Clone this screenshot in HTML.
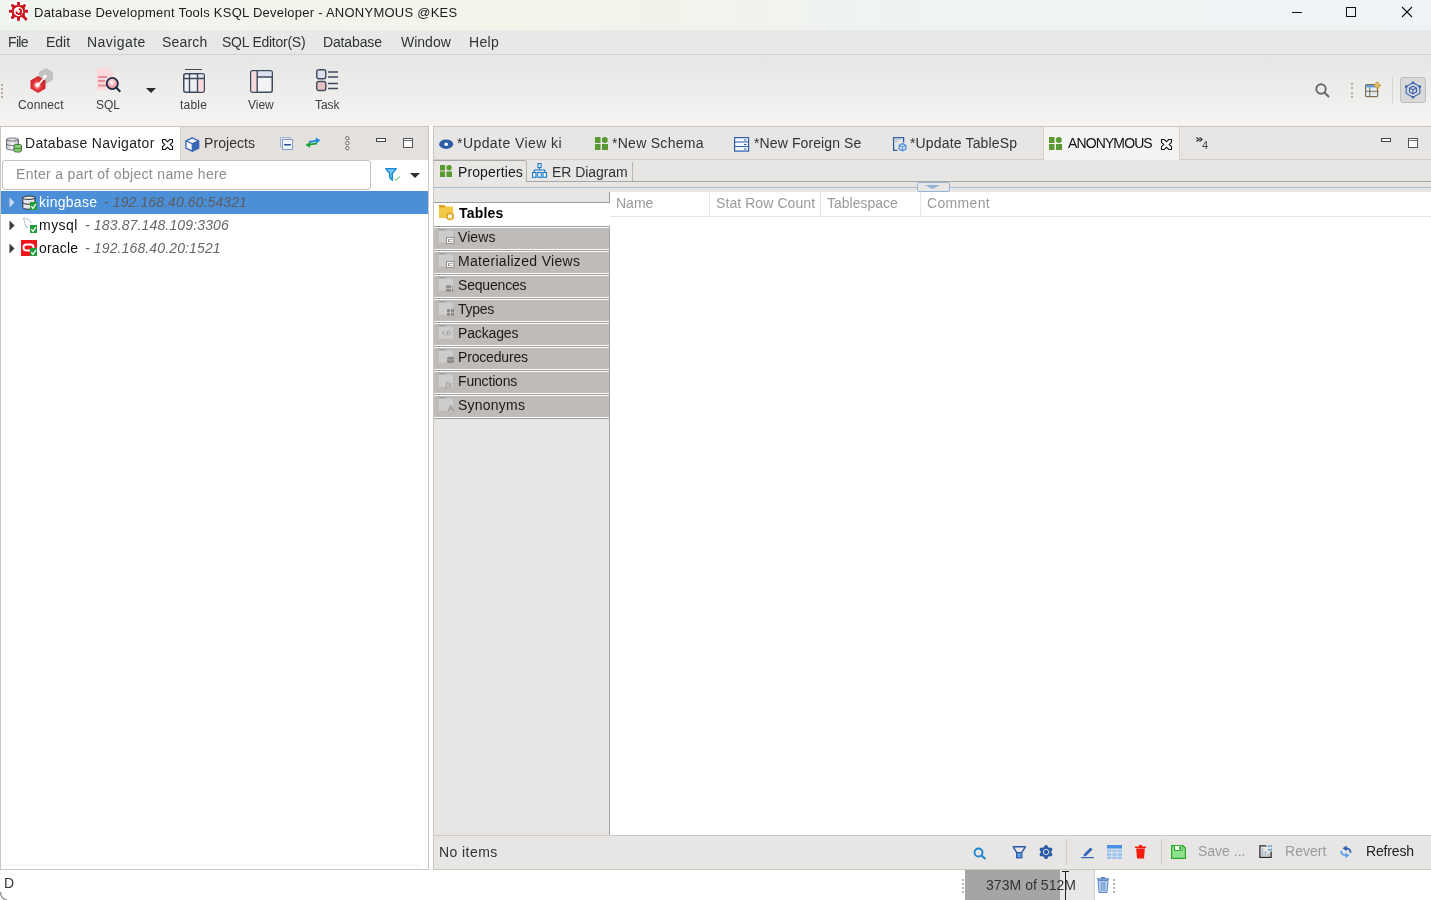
<!DOCTYPE html>
<html><head><meta charset="utf-8"><style>
html,body{margin:0;padding:0;width:1431px;height:900px;overflow:hidden;background:#fff;}
body{position:relative;font-family:"Liberation Sans",sans-serif;}
.t{position:absolute;white-space:nowrap;will-change:transform;font-family:"Liberation Sans",sans-serif;}
svg{overflow:visible}
</style></head><body>
<div style="position:absolute;left:0px;top:0px;width:1431px;height:30px;background:linear-gradient(90deg,#f0f4ee 0%,#f3f4ea 35%,#f1f3ec 50%,#eef3f3 65%,#eef3f5 100%);"></div>
<div style="position:absolute;left:9px;top:2px;width:19px;height:19px;background:#fff;"></div>
<svg style="position:absolute;left:9px;top:2px" width="19" height="19" viewBox="0 0 19 19"><g fill="#c8141c">
<rect x="8" y="0" width="2.9" height="3.6"/><rect x="8" y="15" width="2.9" height="3.8"/>
<rect x="0" y="7.8" width="3.6" height="2.9"/><rect x="15.3" y="7.8" width="3.7" height="2.9"/>
<circle cx="3.5" cy="3.6" r="1.6"/><circle cx="15.4" cy="3.6" r="1.6"/><circle cx="3.5" cy="15.4" r="1.6"/>
<path fill-rule="evenodd" d="M3.1 3.2 H15.8 V15.3 H3.1Z M9.45 4.75 A4.7 4.7 0 1 0 9.46 4.75Z"/>
<path fill-rule="evenodd" d="M9.8 6.3 A3.3 3.3 0 1 1 6.5 9.6 L8.2 9.3 A1.5 1.5 0 1 0 9.6 7.9Z"/>
<path d="M10.8 10.9 L17.8 18" stroke="#c8141c" stroke-width="2.7"/></g>
<path d="M12.2 12.3 L13 13.1" stroke="#fff" stroke-width="0.8"/></svg>
<div class="t" style="left:33.5px;top:6px;font-size:13px;line-height:13px;color:#1c1c1c;letter-spacing:0.246px;">Database Development Tools KSQL Developer - ANONYMOUS @KES</div>
<div style="position:absolute;left:1292px;top:12px;width:10px;height:1px;background:#111;"></div>
<div style="position:absolute;left:1346px;top:7px;width:10px;height:10px;border:1px solid #111;box-sizing:border-box;"></div>
<svg style="position:absolute;left:1401px;top:6px" width="12" height="12" viewBox="0 0 12 12"><path d="M1 1L11 11M11 1L1 11" stroke="#111" stroke-width="1.1"/></svg>
<div style="position:absolute;left:0px;top:30px;width:1431px;height:24px;background:#e8e8e7;"></div>
<div style="position:absolute;left:0px;top:54px;width:1431px;height:1px;background:#d2d2d0;"></div>
<div class="t" style="left:7.9px;top:35px;font-size:14px;line-height:14px;color:#2e3436;letter-spacing:-0.667px;">File</div>
<div class="t" style="left:45.8px;top:35px;font-size:14px;line-height:14px;color:#2e3436;">Edit</div>
<div class="t" style="left:86.9px;top:35px;font-size:14px;line-height:14px;color:#2e3436;letter-spacing:0.429px;">Navigate</div>
<div class="t" style="left:162.0px;top:35px;font-size:14px;line-height:14px;color:#2e3436;letter-spacing:0.200px;">Search</div>
<div class="t" style="left:221.7px;top:35px;font-size:14px;line-height:14px;color:#2e3436;letter-spacing:-0.250px;">SQL Editor(S)</div>
<div class="t" style="left:322.9px;top:35px;font-size:14px;line-height:14px;color:#2e3436;letter-spacing:-0.143px;">Database</div>
<div class="t" style="left:400.6px;top:35px;font-size:14px;line-height:14px;color:#2e3436;">Window</div>
<div class="t" style="left:468.7px;top:35px;font-size:14px;line-height:14px;color:#2e3436;letter-spacing:0.333px;">Help</div>
<div style="position:absolute;left:0px;top:55px;width:1431px;height:71px;background:linear-gradient(180deg,#e6e6e4 0%,#f5f4f2 100%);"></div>
<div style="position:absolute;left:1px;top:84px;width:2px;height:2px;background:#b5ab9e;"></div>
<div style="position:absolute;left:1px;top:88px;width:2px;height:2px;background:#b5ab9e;"></div>
<div style="position:absolute;left:1px;top:92px;width:2px;height:2px;background:#b5ab9e;"></div>
<div style="position:absolute;left:1px;top:96px;width:2px;height:2px;background:#b5ab9e;"></div>
<svg style="position:absolute;left:30px;top:68px" width="24" height="25" viewBox="0 0 24 25"><defs><radialGradient id="rg" cx="0.45" cy="0.55" r="0.6"><stop offset="0" stop-color="#fff0f0"/><stop offset="0.45" stop-color="#e2353b"/><stop offset="1" stop-color="#c51d24"/></radialGradient></defs>
<polygon points="16,0 23,4 23,12 16,16 9,12 9,4" fill="#c2c2c2"/>
<polygon points="8,8 15.5,12.5 15.5,20.5 8,25 0.5,20.5 0.5,12.5" fill="url(#rg)"/>
<path d="M8 17 L15 9" stroke="#fff" stroke-width="1.8"/><circle cx="7.5" cy="17" r="2" fill="#fff"/><circle cx="15" cy="8.5" r="1.8" fill="#fff"/></svg>
<div class="t" style="left:18.4px;top:99px;font-size:12px;line-height:12px;color:#3c3c3c;letter-spacing:0.150px;">Connect</div>
<svg style="position:absolute;left:96px;top:68px" width="26" height="25" viewBox="0 0 26 25"><path d="M1 0 H12 L17 5 V22 H1 Z" fill="#fadadd"/>
<rect x="2" y="8" width="9" height="2" fill="#e98e95"/><rect x="2" y="12" width="7" height="2" fill="#e98e95"/><rect x="2" y="16.5" width="8" height="2" fill="#e98e95"/>
<defs><radialGradient id="lg" cx="0.45" cy="0.4" r="0.6"><stop offset="0" stop-color="#fff"/><stop offset="0.5" stop-color="#f4b6bc"/><stop offset="1" stop-color="#e98e95"/></radialGradient></defs>
<circle cx="16.3" cy="15.5" r="5.6" fill="url(#lg)" stroke="#1e2a44" stroke-width="1.8"/><path d="M20.2 19.5 L24.3 23.8" stroke="#1e2a44" stroke-width="2"/></svg>
<div class="t" style="left:96.4px;top:99px;font-size:12px;line-height:12px;color:#3c3c3c;">SQL</div>
<svg style="position:absolute;left:146px;top:88px" width="10" height="5" viewBox="0 0 10 5"><path d="M0 0H10L5 5Z" fill="#2b2b2b"/></svg>
<svg style="position:absolute;left:183px;top:69px" width="22" height="24" viewBox="0 0 22 24"><rect x="2" y="0" width="17" height="1" fill="#3e4a5c"/>
<rect x="0.75" y="4.75" width="20.5" height="18.5" rx="2" fill="#eef0f3" stroke="#3e4a5c" stroke-width="1.5"/>
<rect x="15" y="5.5" width="5.5" height="4" fill="#dde3ee"/><rect x="15" y="10" width="5.5" height="12.5" fill="#f8d9dc"/>
<path d="M1 9.5H21M6.5 5V23M14.5 5V23" stroke="#3e4a5c" stroke-width="1.4"/></svg>
<div class="t" style="left:180.1px;top:99px;font-size:12px;line-height:12px;color:#3c3c3c;letter-spacing:0.225px;">table</div>
<svg style="position:absolute;left:250px;top:70px" width="23" height="23" viewBox="0 0 23 23"><rect x="0.75" y="0.75" width="21.5" height="21.5" rx="2" fill="#f3f3f5" stroke="#3e4a5c" stroke-width="1.5"/>
<rect x="1.5" y="1.5" width="5.5" height="20" fill="#f8d9dc"/><rect x="8" y="1.5" width="13.5" height="5" fill="#dde3ee"/>
<path d="M7.2 1V22M7.2 7H22" stroke="#3e4a5c" stroke-width="1.4"/></svg>
<div class="t" style="left:247.5px;top:99px;font-size:12px;line-height:12px;color:#3c3c3c;letter-spacing:-0.033px;">View</div>
<svg style="position:absolute;left:316px;top:69px" width="23" height="23" viewBox="0 0 23 23"><rect x="0.75" y="0.75" width="9" height="9" rx="2" fill="#dde1ee" stroke="#3e4a5c" stroke-width="1.4"/>
<rect x="0.75" y="12.5" width="9" height="9" rx="2" fill="#e9c2c6" stroke="#3e4a5c" stroke-width="1.4"/>
<path d="M12 3H22M12 8H22M12 14.5H22M12 19.5H22" stroke="#3e4a5c" stroke-width="1.4"/></svg>
<div class="t" style="left:314.5px;top:99px;font-size:12px;line-height:12px;color:#3c3c3c;letter-spacing:-0.033px;">Task</div>
<svg style="position:absolute;left:1315px;top:83px" width="16" height="16" viewBox="0 0 16 16"><circle cx="6" cy="6" r="4.7" fill="none" stroke="#6a6a6a" stroke-width="1.9"/><path d="M9.4 9.4L14 14" stroke="#6a6a6a" stroke-width="2.1"/></svg>
<div style="position:absolute;left:1351px;top:83px;width:2px;height:2px;background:#b9ae9f;"></div>
<div style="position:absolute;left:1351px;top:87px;width:2px;height:2px;background:#b9ae9f;"></div>
<div style="position:absolute;left:1351px;top:92px;width:2px;height:2px;background:#b9ae9f;"></div>
<div style="position:absolute;left:1351px;top:96px;width:2px;height:2px;background:#b9ae9f;"></div>
<svg style="position:absolute;left:1365px;top:82px" width="16" height="16" viewBox="0 0 16 16"><rect x="0.6" y="2.6" width="12" height="12" rx="1.2" fill="#e3f1fc" stroke="#7b6c4c" stroke-width="1.2"/>
<rect x="1.2" y="3.2" width="10.8" height="2.2" fill="#5b97dc"/><path d="M1 9.3H12.5M4.8 5.5V14.5" stroke="#7b6c4c" stroke-width="1.1"/>
<path d="M7 13 L11 10" stroke="#e8c070" stroke-width="0.6"/>
<path d="M12.2 0.4 L15.2 3.4 L12.2 6.4 L9.2 3.4Z" fill="#fff" stroke="#c8961e" stroke-width="1.1"/><path d="M12.2 1.8V5M10.6 3.4H13.8" stroke="#c8961e" stroke-width="0.8"/></svg>
<div style="position:absolute;left:1392px;top:77px;width:1px;height:26px;background:#d6d4d0;"></div>
<div style="position:absolute;left:1400px;top:77px;width:26px;height:26px;background:#d9d9d9;border:1px solid #bdbdbd;border-radius:3px;box-sizing:border-box;"></div>
<svg style="position:absolute;left:1404px;top:81px" width="18" height="18" viewBox="0 0 18 18"><path d="M9 1.8 L15.8 5.6 V12.4 L9 16.2 L2.2 12.4 V5.6 Z" fill="none" stroke="#3a64b0" stroke-width="1.1"/>
<g fill="#3a64b0"><rect x="7.8" y="0.6" width="2.4" height="2.4"/><rect x="7.8" y="15" width="2.4" height="2.4"/><rect x="1" y="4.4" width="2.4" height="2.4"/><rect x="14.6" y="4.4" width="2.4" height="2.4"/></g>
<path d="M9 5.2 L12.5 7 V11 L9 12.8 L5.5 11 V7 Z M5.5 7 L9 8.8 L12.5 7 M9 8.8 V12.8" fill="none" stroke="#3a64b0" stroke-width="1.2"/></svg>
<div style="position:absolute;left:0px;top:126px;width:429px;height:744px;background:#fff;border:1px solid #cbc5bf;box-sizing:border-box;"></div>
<div style="position:absolute;left:1px;top:127px;width:427px;height:33px;background:#e3e0dd;"></div>
<div style="position:absolute;left:1px;top:127px;width:180px;height:33px;background:#fff;"></div>
<div style="position:absolute;left:180px;top:127px;width:1px;height:33px;background:#d6d2cd;"></div>
<svg style="position:absolute;left:6px;top:137px" width="16" height="16" viewBox="0 0 16 16"><defs><linearGradient id="dbg" x1="0" x2="1"><stop offset="0" stop-color="#c9ccd2"/><stop offset="0.5" stop-color="#f2f3f5"/><stop offset="1" stop-color="#b9bcc3"/></linearGradient></defs>
<path d="M0.5 2.5 C0.5 0.5 12.5 0.5 12.5 2.5 V11.5 C12.5 13.5 0.5 13.5 0.5 11.5 Z" fill="url(#dbg)" stroke="#5a5e66" stroke-width="0.9"/>
<path d="M0.5 2.5 C0.5 4.5 12.5 4.5 12.5 2.5 M0.5 7 C0.5 9 12.5 9 12.5 7" fill="none" stroke="#5a5e66" stroke-width="0.9"/>
<path d="M8 8.5 C8 7 15.5 7 15.5 8.5 V14 C15.5 15.5 8 15.5 8 14 Z" fill="#7fd36b" stroke="#4d5a4a" stroke-width="0.9"/>
<path d="M8 10.5 C8 12 15.5 12 15.5 10.5" fill="none" stroke="#4d5a4a" stroke-width="0.8"/></svg>
<div class="t" style="left:25.3px;top:136px;font-size:14px;line-height:14px;color:#1f1f1f;letter-spacing:0.329px;">Database Navigator</div>
<svg style="position:absolute;left:161.5px;top:138.5px" width="11" height="11" viewBox="0 0 11 11"><path d="M0.5 0.5 H3.3 L5.5 2.8 L7.7 0.5 H10.5 V3.3 L8.2 5.5 L10.5 7.7 V10.5 H7.7 L5.5 8.2 L3.3 10.5 H0.5 V7.7 L2.8 5.5 L0.5 3.3 Z" fill="#fff" stroke="#111" stroke-width="1.1"/></svg>
<svg style="position:absolute;left:185px;top:137px" width="15" height="15" viewBox="0 0 15 15"><path d="M7.3 0.8 L13.7 3.8 V11.2 L7.3 14.2 L0.9 11.2 V3.8 Z" fill="#f4f6fb" stroke="#3a66b4" stroke-width="1.3"/>
<path d="M7.3 6.8 L13.7 3.8 V11.2 L7.3 14.2Z" fill="#3a66b4"/><path d="M0.9 3.8 L7.3 6.8 L13.7 3.8 M7.3 6.8 V14.2" fill="none" stroke="#3a66b4" stroke-width="1.2"/></svg>
<div class="t" style="left:203.9px;top:136px;font-size:14px;line-height:14px;color:#333;letter-spacing:0.071px;">Projects</div>
<svg style="position:absolute;left:280px;top:137px" width="13" height="13" viewBox="0 0 13 13"><rect x="0.5" y="0.5" width="9.5" height="9.5" fill="#dbe6f6" stroke="#9db6dc"/><rect x="2.5" y="2.5" width="10" height="10" fill="#eef5fc" stroke="#8a9ab8"/><rect x="4.2" y="7" width="6.6" height="1.5" fill="#1f4f96"/></svg>
<svg style="position:absolute;left:305px;top:137px" width="16" height="11" viewBox="0 0 16 11"><path d="M4 5 L13 3.6" fill="none" stroke="#1a8ad6" stroke-width="1.8"/><path d="M10.5 0.6 L15.5 3.3 L11.2 6.6Z" fill="#1a8ad6"/><path d="M12 6.4 L3 7.8" fill="none" stroke="#16a033" stroke-width="1.8"/><path d="M5.5 4.8 L0.5 8.1 L4.8 10.8Z" fill="#16a033"/></svg>
<svg style="position:absolute;left:344px;top:136px" width="7" height="15" viewBox="0 0 7 15"><circle cx="3.3" cy="2.2" r="1.7" fill="#fff" stroke="#555" stroke-width="0.9"/><circle cx="3.3" cy="7.2" r="1.7" fill="#fff" stroke="#555" stroke-width="0.9"/><circle cx="3.3" cy="12.2" r="1.7" fill="#fff" stroke="#555" stroke-width="0.9"/></svg>
<div style="position:absolute;left:376px;top:138px;width:10px;height:4px;border:1px solid #444;box-sizing:border-box;background:#fff;"></div>
<div style="position:absolute;left:403px;top:138px;width:10px;height:10px;border:1px solid #555;box-sizing:border-box;background:#fff;"></div>
<div style="position:absolute;left:404px;top:140px;width:8px;height:1px;background:#777;"></div>
<div style="position:absolute;left:2px;top:160px;width:369px;height:30px;background:#fff;border:1px solid #c4c0bb;border-radius:3px;box-sizing:border-box;"></div>
<div class="t" style="left:16.1px;top:167px;font-size:14px;line-height:14px;color:#8c8c8c;letter-spacing:0.323px;">Enter a part of object name here</div>
<svg style="position:absolute;left:385px;top:168px" width="17" height="14" viewBox="0 0 17 14"><path d="M0.7 0.7 H11.3 L7.3 5.5 V12.4 L4.7 9.8 V5.5 Z" fill="#6ec8f0" stroke="#1a88d0" stroke-width="1.3" stroke-linejoin="round"/><path d="M9.2 10.6 L10.9 12.3 L15.2 8.3" fill="none" stroke="#2db34a" stroke-width="0.9"/></svg>
<svg style="position:absolute;left:410px;top:173px" width="10" height="5" viewBox="0 0 10 5"><path d="M0 0H10L5 5Z" fill="#2b2f33"/></svg>
<div style="position:absolute;left:1px;top:191px;width:427px;height:23px;background:#4a8fd8;"></div>
<svg style="position:absolute;left:9px;top:197px" width="6" height="11" viewBox="0 0 6 11"><path d="M0.5 0.5 L5.5 5.5 L0.5 10.5Z" fill="#c8daf2"/></svg>
<div class="t" style="left:38.8px;top:195px;font-size:14px;line-height:14px;color:#fff;letter-spacing:0.271px;">kingbase</div>
<div class="t" style="left:104.3px;top:195px;font-size:14px;line-height:14px;color:#5d5d5d;letter-spacing:0.100px;font-style:italic;">- 192.168.40.60:54321</div>
<svg style="position:absolute;left:9px;top:220px" width="6" height="11" viewBox="0 0 6 11"><path d="M0.5 0.5 L5.5 5.5 L0.5 10.5Z" fill="#3a3a3a"/></svg>
<div class="t" style="left:38.8px;top:218px;font-size:14px;line-height:14px;color:#111;letter-spacing:0.475px;">mysql</div>
<div class="t" style="left:85.0px;top:218px;font-size:14px;line-height:14px;color:#666;letter-spacing:0.145px;font-style:italic;">- 183.87.148.109:3306</div>
<svg style="position:absolute;left:9px;top:243px" width="6" height="11" viewBox="0 0 6 11"><path d="M0.5 0.5 L5.5 5.5 L0.5 10.5Z" fill="#3a3a3a"/></svg>
<div class="t" style="left:38.8px;top:241px;font-size:14px;line-height:14px;color:#111;letter-spacing:0.180px;">oracle</div>
<div class="t" style="left:85.0px;top:241px;font-size:14px;line-height:14px;color:#666;letter-spacing:0.132px;font-style:italic;">- 192.168.40.20:1521</div>
<svg style="position:absolute;left:22px;top:195px" width="16" height="16" viewBox="0 0 16 16"><path d="M0.8 2.8 C0.8 0.5 13 0.5 13 2.8 V12.5 C13 14.8 0.8 14.8 0.8 12.5 Z" fill="#e6e7ea" stroke="#2d2d2d" stroke-width="1"/>
<path d="M0.8 2.8 C0.8 5 13 5 13 2.8 M0.8 7.5 C0.8 9.8 13 9.8 13 7.5" fill="none" stroke="#2d2d2d" stroke-width="1"/></svg>
<svg style="position:absolute;left:21px;top:217px" width="16" height="16" viewBox="0 0 16 16"><path d="M2.5 1.2 C5 1 8.5 2.8 10.5 6.2 M2.5 1.2 C3 3 3.8 5 4 7 C4.2 8.5 5 9.5 6 10" fill="none" stroke="#7f9bb8" stroke-width="0.9" stroke-dasharray="1.2 0.6"/><path d="M5 9 L7 10.5 L5.5 10.8Z" fill="#5f7fa8"/></svg>
<div style="position:absolute;left:21px;top:240px;width:16px;height:16px;background:#f0141e;"></div>
<svg style="position:absolute;left:21px;top:240px" width="16" height="16" viewBox="0 0 16 16"><rect x="2.5" y="4.5" width="10" height="6" rx="3" fill="none" stroke="#fff" stroke-width="2"/></svg>
<svg style="position:absolute;left:30px;top:202px" width="7" height="8" viewBox="0 0 7 8"><rect x="0" y="0" width="7" height="8" fill="#1f9d3a"/><path d="M1.3 4.2 L3 6.3 L5.9 2" fill="none" stroke="#fff" stroke-width="1.3"/></svg>
<svg style="position:absolute;left:30px;top:225px" width="7" height="8" viewBox="0 0 7 8"><rect x="0" y="0" width="7" height="8" fill="#1f9d3a"/><path d="M1.3 4.2 L3 6.3 L5.9 2" fill="none" stroke="#fff" stroke-width="1.3"/></svg>
<svg style="position:absolute;left:30px;top:248px" width="7" height="8" viewBox="0 0 7 8"><rect x="0" y="0" width="7" height="8" fill="#1f9d3a"/><path d="M1.3 4.2 L3 6.3 L5.9 2" fill="none" stroke="#fff" stroke-width="1.3"/></svg>
<div style="position:absolute;left:5px;top:864px;width:415px;height:2px;background:#f8f8f8;"></div>
<div style="position:absolute;left:433px;top:126px;width:998px;height:744px;background:#fff;border:1px solid #cbc5bf;border-right:none;box-sizing:border-box;"></div>
<div style="position:absolute;left:434px;top:127px;width:997px;height:32px;background:#e8e6e4;"></div>
<div style="position:absolute;left:434px;top:159px;width:997px;height:1px;background:#d0ccc7;"></div>
<div style="position:absolute;left:1043px;top:127px;width:137px;height:33px;background:#f4f3f1;border-left:1px solid #d6d2cd;border-right:1px solid #d6d2cd;box-sizing:border-box;"></div>
<svg style="position:absolute;left:439px;top:139px" width="15" height="11" viewBox="0 0 15 11"><ellipse cx="7.2" cy="5.2" rx="7" ry="4.8" fill="#2f5ea8"/><circle cx="7.2" cy="5.2" r="1.8" fill="#fff"/></svg>
<div class="t" style="left:457.4px;top:136px;font-size:14px;line-height:14px;color:#333;letter-spacing:0.429px;">*Update View ki</div>
<svg style="position:absolute;left:595px;top:137px" width="13" height="13" viewBox="0 0 13 13"><rect x="0" y="0" width="5.5" height="6" fill="#5a9a32"/><circle cx="9.8" cy="3" r="3" fill="#5a9a32"/><rect x="0" y="7" width="5.5" height="6" fill="#5a9a32"/><rect x="7" y="7" width="6" height="6" fill="#5a9a32"/></svg>
<div class="t" style="left:611.9px;top:136px;font-size:14px;line-height:14px;color:#333;letter-spacing:0.280px;">*New Schema</div>
<svg style="position:absolute;left:734px;top:137px" width="16" height="15" viewBox="0 0 16 15"><rect x="0.6" y="0.6" width="14" height="13.5" fill="#f4f8ff" stroke="#2f5ea8" stroke-width="1.2"/><path d="M1 5H14.5M1 9.5H14.5M10 3H12.5M10 7.5H12.5M10 12H12.5" stroke="#2f5ea8" stroke-width="1.2"/></svg>
<div class="t" style="left:753.5px;top:136px;font-size:14px;line-height:14px;color:#333;letter-spacing:0.107px;">*New Foreign Se</div>
<svg style="position:absolute;left:892px;top:136px" width="16" height="16" viewBox="0 0 16 16"><path d="M5 14.3 H1.6 V1.6 H11.6 V6" fill="none" stroke="#2f5ea8" stroke-width="1.3" stroke-linecap="round"/><path d="M3 3.5H8.6M3 5.5H6.2" stroke="#a9b6c6" stroke-width="0.9"/><path d="M10.5 7.6 L13.8 9.3 V13 L10.5 14.8 L7.2 13 V9.3Z" fill="none" stroke="#4a90e2" stroke-width="1.3"/><path d="M7.4 9.4 L10.5 11 L13.6 9.4 M10.5 11V14.6" fill="none" stroke="#4a90e2" stroke-width="1.1"/></svg>
<div class="t" style="left:910.3px;top:136px;font-size:14px;line-height:14px;color:#333;letter-spacing:0.157px;">*Update TableSp</div>
<svg style="position:absolute;left:1049px;top:137px" width="13" height="13" viewBox="0 0 13 13"><rect x="0" y="0" width="5.5" height="6" fill="#5a9a32"/><circle cx="9.8" cy="3" r="3" fill="#5a9a32"/><rect x="0" y="7" width="5.5" height="6" fill="#5a9a32"/><rect x="7" y="7" width="6" height="6" fill="#5a9a32"/></svg>
<div class="t" style="left:1067.9px;top:136px;font-size:14px;line-height:14px;color:#111;letter-spacing:-0.887px;">ANONYMOUS</div>
<svg style="position:absolute;left:1160.5px;top:138.5px" width="11" height="11" viewBox="0 0 11 11"><path d="M0.5 0.5 H3.3 L5.5 2.8 L7.7 0.5 H10.5 V3.3 L8.2 5.5 L10.5 7.7 V10.5 H7.7 L5.5 8.2 L3.3 10.5 H0.5 V7.7 L2.8 5.5 L0.5 3.3 Z" fill="#fff" stroke="#111" stroke-width="1.1"/></svg>
<svg style="position:absolute;left:1196px;top:137px" width="14" height="13" viewBox="0 0 14 13"><path d="M0.5 0.5 L3 2.5 L0.5 4.5 M3.5 0.5 L6 2.5 L3.5 4.5" fill="none" stroke="#333" stroke-width="1.3"/></svg>
<div class="t" style="left:1202.0px;top:140px;font-size:11px;line-height:11px;color:#444;">4</div>
<div style="position:absolute;left:1381px;top:138px;width:10px;height:4px;border:1px solid #444;box-sizing:border-box;background:#fff;"></div>
<div style="position:absolute;left:1408px;top:138px;width:10px;height:10px;border:1px solid #555;box-sizing:border-box;background:#fff;"></div>
<div style="position:absolute;left:1409px;top:140px;width:8px;height:1px;background:#777;"></div>
<div style="position:absolute;left:434px;top:160px;width:997px;height:22px;background:#e8e6e4;"></div>
<div style="position:absolute;left:527px;top:181px;width:904px;height:1px;background:#a8a6a3;"></div>
<div style="position:absolute;left:434px;top:160px;width:93px;height:22px;background:#e9e7e5;border-top:1px solid #a9a7a4;border-right:1px solid #b3b0ac;border-top-right-radius:3px;box-sizing:border-box;"></div>
<div style="position:absolute;left:632px;top:162px;width:1px;height:19px;background:#b9b6b2;"></div>
<svg style="position:absolute;left:440px;top:165px" width="12" height="12" viewBox="0 0 13 13"><rect x="0" y="0" width="5.5" height="6" fill="#5a9a32"/><circle cx="9.8" cy="3" r="3" fill="#5a9a32"/><rect x="0" y="7" width="5.5" height="6" fill="#5a9a32"/><rect x="7" y="7" width="6" height="6" fill="#5a9a32"/></svg>
<div class="t" style="left:457.8px;top:165px;font-size:14px;line-height:14px;color:#1a1a1a;letter-spacing:0.111px;">Properties</div>
<svg style="position:absolute;left:532px;top:163px" width="15" height="15" viewBox="0 0 15 15"><rect x="6" y="0.6" width="3" height="4" fill="#fff" stroke="#1677c8" stroke-width="1.1"/><path d="M7.5 4.6V7 M2.2 9V7H12.8V9" fill="none" stroke="#1677c8" stroke-width="1.1"/><rect x="0.6" y="9.5" width="3.4" height="4.8" fill="#fff" stroke="#1677c8" stroke-width="1.1"/><rect x="5.8" y="9.5" width="3.4" height="4.8" fill="#fff" stroke="#1677c8" stroke-width="1.1"/><rect x="11" y="9.5" width="3.4" height="4.8" fill="#fff" stroke="#1677c8" stroke-width="1.1"/></svg>
<div class="t" style="left:552.1px;top:165px;font-size:14px;line-height:14px;color:#333;letter-spacing:-0.056px;">ER Diagram</div>
<div style="position:absolute;left:434px;top:182px;width:997px;height:6px;background:#e8e6e4;"></div>
<div style="position:absolute;left:434px;top:187px;width:997px;height:1px;background:#a9bdd4;"></div>
<div style="position:absolute;left:434px;top:188px;width:997px;height:4px;background:#e8e6e4;"></div>
<div style="position:absolute;left:917px;top:182px;width:33px;height:10px;background:#e9e7e5;border:1px solid #98b4d4;border-radius:2px;box-sizing:border-box;"></div>
<svg style="position:absolute;left:925px;top:185px" width="15" height="4" viewBox="0 0 15 4"><path d="M0 0H15L7.5 4Z" fill="#95b2d4"/></svg>
<div style="position:absolute;left:434px;top:188px;width:175px;height:647px;background:#e8e6e4;"></div>
<div style="position:absolute;left:609px;top:192px;width:1px;height:11px;background:#9e9c99;"></div>
<div style="position:absolute;left:609px;top:226px;width:1px;height:193px;background:#a5a3a0;"></div>
<div style="position:absolute;left:609px;top:419px;width:1px;height:416px;background:#a3a3a3;"></div>
<div style="position:absolute;left:434px;top:202px;width:175px;height:1px;background:#9e9c99;"></div>
<div style="position:absolute;left:434px;top:203px;width:175px;height:23px;background:#fff;"></div>
<svg style="position:absolute;left:439px;top:205px" width="16" height="16" viewBox="0 0 16 16"><path d="M0 0 H5 L6.5 1.6 H14 V13 H0Z" fill="#f2c744"/><path d="M0 0 H5 L6.5 1.6 V2.4 H0Z" fill="#e0a020"/><circle cx="11" cy="11.3" r="4.2" fill="#f2c744"/><path d="M9.3 8.6 H12.7 L13.8 10 V12.6 L12.7 14 H9.3 L8.2 12.6 V10Z" fill="#fff7d8" stroke="#d9961a" stroke-width="1.1"/><path d="M7 9.5H8.3M7 12.5H8.3M13.8 9.5H15M13.8 12.5H15" stroke="#d9961a" stroke-width="0.9"/></svg>
<div class="t" style="left:458.7px;top:206px;font-size:14px;line-height:14px;color:#000;letter-spacing:0.200px;font-weight:bold;">Tables</div>
<div style="position:absolute;left:434px;top:226px;width:175px;height:1px;background:#9e9e9e;"></div>
<div style="position:absolute;left:434px;top:227px;width:175px;height:1px;background:#fff;"></div>
<div style="position:absolute;left:434px;top:228px;width:175px;height:21px;background:#bfbbb8;"></div>
<div style="position:absolute;left:434px;top:249px;width:175px;height:1px;background:#fff;"></div>
<svg style="position:absolute;left:439px;top:229px" width="16" height="16" viewBox="0 0 16 16"><rect x="0" y="0.2" width="6.5" height="1.2" fill="#9c9c9c"/><rect x="0" y="1.8" width="14" height="12" fill="#cdcdcd"/><rect x="7.4" y="8.4" width="7.4" height="6.2" fill="#fff" stroke="#8c8c8c" stroke-width="0.9"/><rect x="9" y="10" width="1.3" height="3" fill="#8c8c8c"/><path d="M10.8 10.4H13.5M10.8 12.6H13.5" stroke="#8c8c8c" stroke-width="0.9"/></svg>
<div class="t" style="left:458.2px;top:230px;font-size:14px;line-height:14px;color:#1a1a1a;letter-spacing:0.075px;">Views</div>
<div style="position:absolute;left:434px;top:250px;width:175px;height:1px;background:#9e9e9e;"></div>
<div style="position:absolute;left:434px;top:251px;width:175px;height:1px;background:#fff;"></div>
<div style="position:absolute;left:434px;top:252px;width:175px;height:21px;background:#bfbbb8;"></div>
<div style="position:absolute;left:434px;top:273px;width:175px;height:1px;background:#fff;"></div>
<svg style="position:absolute;left:439px;top:253px" width="16" height="16" viewBox="0 0 16 16"><rect x="0" y="0.2" width="6.5" height="1.2" fill="#9c9c9c"/><rect x="0" y="1.8" width="14" height="12" fill="#cdcdcd"/><rect x="7.4" y="8.4" width="7.4" height="6.2" fill="#fff" stroke="#8c8c8c" stroke-width="0.9"/><rect x="9" y="10" width="1.3" height="3" fill="#8c8c8c"/><path d="M10.8 10.4H13.5M10.8 12.6H13.5" stroke="#8c8c8c" stroke-width="0.9"/></svg>
<div class="t" style="left:458.2px;top:254px;font-size:14px;line-height:14px;color:#1a1a1a;letter-spacing:0.329px;">Materialized Views</div>
<div style="position:absolute;left:434px;top:274px;width:175px;height:1px;background:#9e9e9e;"></div>
<div style="position:absolute;left:434px;top:275px;width:175px;height:1px;background:#fff;"></div>
<div style="position:absolute;left:434px;top:276px;width:175px;height:21px;background:#bfbbb8;"></div>
<div style="position:absolute;left:434px;top:297px;width:175px;height:1px;background:#fff;"></div>
<svg style="position:absolute;left:439px;top:277px" width="16" height="16" viewBox="0 0 16 16"><rect x="0" y="0.2" width="6.5" height="1.2" fill="#9c9c9c"/><rect x="0" y="1.8" width="14" height="12" fill="#cdcdcd"/><rect x="7" y="8.3" width="5" height="2.6" fill="#8a8a8a"/><rect x="7" y="11.8" width="5" height="2.8" fill="#8a8a8a"/><path d="M13.5 9V14.2M12.5 13.2L13.5 14.5L14.5 13.2" fill="none" stroke="#8a8a8a" stroke-width="0.8"/></svg>
<div class="t" style="left:458.2px;top:278px;font-size:14px;line-height:14px;color:#1a1a1a;letter-spacing:-0.188px;">Sequences</div>
<div style="position:absolute;left:434px;top:298px;width:175px;height:1px;background:#9e9e9e;"></div>
<div style="position:absolute;left:434px;top:299px;width:175px;height:1px;background:#fff;"></div>
<div style="position:absolute;left:434px;top:300px;width:175px;height:21px;background:#bfbbb8;"></div>
<div style="position:absolute;left:434px;top:321px;width:175px;height:1px;background:#fff;"></div>
<svg style="position:absolute;left:439px;top:301px" width="16" height="16" viewBox="0 0 16 16"><rect x="0" y="0.2" width="6.5" height="1.2" fill="#9c9c9c"/><rect x="0" y="1.8" width="14" height="12" fill="#cdcdcd"/><rect x="8" y="8" width="3" height="3" fill="#8a8a8a"/><rect x="12" y="8" width="3" height="3" fill="#8a8a8a"/><rect x="8" y="11.7" width="3" height="3" fill="#8a8a8a"/><rect x="12" y="11.7" width="3" height="3" fill="#8a8a8a"/></svg>
<div class="t" style="left:458.2px;top:302px;font-size:14px;line-height:14px;color:#1a1a1a;letter-spacing:-0.250px;">Types</div>
<div style="position:absolute;left:434px;top:322px;width:175px;height:1px;background:#9e9e9e;"></div>
<div style="position:absolute;left:434px;top:323px;width:175px;height:1px;background:#fff;"></div>
<div style="position:absolute;left:434px;top:324px;width:175px;height:21px;background:#bfbbb8;"></div>
<div style="position:absolute;left:434px;top:345px;width:175px;height:1px;background:#fff;"></div>
<svg style="position:absolute;left:439px;top:325px" width="16" height="16" viewBox="0 0 16 16"><rect x="0" y="0.2" width="6.5" height="1.2" fill="#9c9c9c"/><rect x="0" y="1.8" width="14" height="12" fill="#cdcdcd"/><path d="M5.5 5.8 L3.3 8 L5.5 10.2 M9 5.8 L7.5 10.5 M9.5 5.8 L11.5 8 L9.5 10.2" fill="none" stroke="#8a8a8a" stroke-width="0.8"/></svg>
<div class="t" style="left:458.2px;top:326px;font-size:14px;line-height:14px;color:#1a1a1a;letter-spacing:-0.143px;">Packages</div>
<div style="position:absolute;left:434px;top:346px;width:175px;height:1px;background:#9e9e9e;"></div>
<div style="position:absolute;left:434px;top:347px;width:175px;height:1px;background:#fff;"></div>
<div style="position:absolute;left:434px;top:348px;width:175px;height:21px;background:#bfbbb8;"></div>
<div style="position:absolute;left:434px;top:369px;width:175px;height:1px;background:#fff;"></div>
<svg style="position:absolute;left:439px;top:349px" width="16" height="16" viewBox="0 0 16 16"><rect x="0" y="0.2" width="6.5" height="1.2" fill="#9c9c9c"/><rect x="0" y="1.8" width="14" height="12" fill="#cdcdcd"/><path d="M8 8.8 C8 7.4 15 7.4 15 8.8 V13 C15 14.6 8 14.6 8 13Z" fill="#8a8a8a"/><path d="M8 10 C8 11.3 15 11.3 15 10" fill="none" stroke="#bdbdbd" stroke-width="0.7"/></svg>
<div class="t" style="left:458.2px;top:350px;font-size:14px;line-height:14px;color:#1a1a1a;letter-spacing:-0.167px;">Procedures</div>
<div style="position:absolute;left:434px;top:370px;width:175px;height:1px;background:#9e9e9e;"></div>
<div style="position:absolute;left:434px;top:371px;width:175px;height:1px;background:#fff;"></div>
<div style="position:absolute;left:434px;top:372px;width:175px;height:21px;background:#bfbbb8;"></div>
<div style="position:absolute;left:434px;top:393px;width:175px;height:1px;background:#fff;"></div>
<svg style="position:absolute;left:439px;top:373px" width="16" height="16" viewBox="0 0 16 16"><rect x="0" y="0.2" width="6.5" height="1.2" fill="#9c9c9c"/><rect x="0" y="1.8" width="14" height="12" fill="#cdcdcd"/><text x="6.3" y="13.6" font-family="Liberation Serif" font-style="italic" font-size="8.5" fill="#8a8a8a">fx</text></svg>
<div class="t" style="left:458.2px;top:374px;font-size:14px;line-height:14px;color:#1a1a1a;letter-spacing:-0.175px;">Functions</div>
<div style="position:absolute;left:434px;top:394px;width:175px;height:1px;background:#9e9e9e;"></div>
<div style="position:absolute;left:434px;top:395px;width:175px;height:1px;background:#fff;"></div>
<div style="position:absolute;left:434px;top:396px;width:175px;height:21px;background:#bfbbb8;"></div>
<div style="position:absolute;left:434px;top:417px;width:175px;height:1px;background:#fff;"></div>
<svg style="position:absolute;left:439px;top:397px" width="16" height="16" viewBox="0 0 16 16"><rect x="0" y="0.2" width="6.5" height="1.2" fill="#9c9c9c"/><rect x="0" y="1.8" width="14" height="12" fill="#cdcdcd"/><path d="M9.2 14.3 L11.8 8.3 L14.6 14.3 M10.3 12.2 H13.4" fill="none" stroke="#8a8a8a" stroke-width="0.9"/></svg>
<div class="t" style="left:458.2px;top:398px;font-size:14px;line-height:14px;color:#1a1a1a;letter-spacing:0.229px;">Synonyms</div>
<div style="position:absolute;left:434px;top:418px;width:175px;height:1px;background:#9e9e9e;"></div>
<div style="position:absolute;left:610px;top:192px;width:821px;height:24px;background:#fff;"></div>
<div style="position:absolute;left:610px;top:216px;width:821px;height:1px;background:#e4e4e4;"></div>
<div style="position:absolute;left:709px;top:192px;width:1px;height:24px;background:#e8e8e8;"></div>
<div style="position:absolute;left:820px;top:192px;width:1px;height:24px;background:#e8e8e8;"></div>
<div style="position:absolute;left:920px;top:192px;width:1px;height:24px;background:#e8e8e8;"></div>
<div class="t" style="left:615.8px;top:196px;font-size:14px;line-height:14px;color:#9a9a9a;">Name</div>
<div class="t" style="left:715.5px;top:196px;font-size:14px;line-height:14px;color:#9a9a9a;letter-spacing:0.077px;">Stat Row Count</div>
<div class="t" style="left:826.5px;top:196px;font-size:14px;line-height:14px;color:#9a9a9a;">Tablespace</div>
<div class="t" style="left:926.5px;top:196px;font-size:14px;line-height:14px;color:#9a9a9a;letter-spacing:0.333px;">Comment</div>
<div style="position:absolute;left:434px;top:835px;width:997px;height:34px;background:#e8e6e4;border-top:1px solid #cfcac5;box-sizing:border-box;"></div>
<div class="t" style="left:439.1px;top:845px;font-size:14px;line-height:14px;color:#333;letter-spacing:0.429px;">No items</div>
<svg style="position:absolute;left:973px;top:847px" width="14" height="13" viewBox="0 0 14 13"><circle cx="5.5" cy="5.5" r="4" fill="none" stroke="#1a86d0" stroke-width="1.8"/><path d="M8.5 8.5 L12.5 12" stroke="#1a86d0" stroke-width="2"/></svg>
<svg style="position:absolute;left:1012px;top:845px" width="15" height="14" viewBox="0 0 15 14"><path d="M0.7 1.7 H13.8 M1.2 2 L4.6 7.3 M13.3 2 L9.9 7.3" fill="none" stroke="#2c5ba8" stroke-width="1.4"/><rect x="4.6" y="7.6" width="5.2" height="5.2" fill="#5a9ae8" stroke="#2c5ba8" stroke-width="1.2"/></svg>
<svg style="position:absolute;left:1039px;top:845px" width="14" height="14" viewBox="0 0 14 14"><g fill="#2c5ba8"><circle cx="7" cy="7" r="5.4"/><circle cx="7.00" cy="1.80" r="1.9"/><circle cx="11.50" cy="4.40" r="1.9"/><circle cx="11.50" cy="9.60" r="1.9"/><circle cx="7.00" cy="12.20" r="1.9"/><circle cx="2.50" cy="9.60" r="1.9"/><circle cx="2.50" cy="4.40" r="1.9"/></g><circle cx="7" cy="7" r="2.7" fill="none" stroke="#e8e6e4" stroke-width="0.9"/><circle cx="7" cy="7" r="1.4" fill="#2c5ba8"/></svg>
<div style="position:absolute;left:1066px;top:839px;width:1px;height:26px;background:#cfcbc6;"></div>
<svg style="position:absolute;left:1081px;top:845px" width="13" height="13" viewBox="0 0 13 13"><path d="M3 9 L9.5 2.5 L11.5 4.5 L5 11 L2.5 11.5Z" fill="#2f66b8"/><rect x="0" y="12" width="13" height="1.2" fill="#2f66b8"/></svg>
<svg style="position:absolute;left:1107px;top:845px" width="15" height="14" viewBox="0 0 15 14"><rect x="0" y="0" width="15" height="3.5" fill="#4a90e2"/><g fill="#9cc4f0"><rect x="0" y="4.5" width="4.3" height="2.8"/><rect x="5.3" y="4.5" width="4.3" height="2.8"/><rect x="10.6" y="4.5" width="4.4" height="2.8"/><rect x="0" y="8.2" width="4.3" height="2.8"/><rect x="5.3" y="8.2" width="4.3" height="2.8"/><rect x="10.6" y="8.2" width="4.4" height="2.8"/><rect x="0" y="11.5" width="4.3" height="2.5"/><rect x="5.3" y="11.5" width="4.3" height="2.5"/><rect x="10.6" y="11.5" width="4.4" height="2.5"/></g></svg>
<svg style="position:absolute;left:1135px;top:845px" width="12" height="14" viewBox="0 0 12 14"><rect x="0" y="1.5" width="11" height="1.6" fill="#f21d0d"/><rect x="4" y="0" width="3" height="2" fill="#f21d0d"/><path d="M1.2 3.5 H9.8 L9 13.5 H2Z" fill="#f21d0d"/></svg>
<div style="position:absolute;left:1161px;top:839px;width:1px;height:26px;background:#cfcbc6;"></div>
<svg style="position:absolute;left:1171px;top:845px" width="15" height="14" viewBox="0 0 15 14"><path d="M0.6 0.6 H12 L14.4 3 V13.4 H0.6Z" fill="#8de08d" stroke="#28a828" stroke-width="1.2"/><rect x="3.5" y="0.6" width="7.5" height="4.8" fill="#fff" stroke="#28a828" stroke-width="1"/><rect x="8" y="1.6" width="2" height="2.8" fill="#28a828"/></svg>
<div class="t" style="left:1197.9px;top:844px;font-size:14px;line-height:14px;color:#9a9a9a;">Save ...</div>
<svg style="position:absolute;left:1259px;top:845px" width="15" height="14" viewBox="0 0 15 14"><path d="M7.5 0.9 H0.9 V12.4 H12.1 V6.5" fill="none" stroke="#2a2a2a" stroke-width="1.3"/><rect x="2.6" y="3.4" width="1.7" height="8.2" fill="#a9b4c4"/><rect x="5.6" y="6.2" width="1.7" height="5.4" fill="#a9b4c4"/><rect x="8.6" y="8.4" width="1.7" height="3.2" fill="#a9b4c4"/><path d="M9.2 2.2 A2 2 0 0 1 12.9 1.8 M13 3.6 A2 2 0 0 1 9.3 4" fill="none" stroke="#3a8ee0" stroke-width="1.1"/></svg>
<div class="t" style="left:1284.8px;top:844px;font-size:14px;line-height:14px;color:#9a9a9a;letter-spacing:0.040px;">Revert</div>
<svg style="position:absolute;left:1340px;top:845px" width="12" height="14" viewBox="0 0 12 14"><path d="M10.6 7.8 C10.8 5 9 3.4 5.8 3.4" fill="none" stroke="#2c5fa8" stroke-width="1.8"/><path d="M2.6 3.3 L6.6 0.4 L6.6 6.2Z" fill="#2c5fa8"/><path d="M1.2 5.8 C1 8.6 2.8 10.2 6 10.2" fill="none" stroke="#5aa0f0" stroke-width="1.8"/><path d="M9.4 10.3 L5.4 7.4 L5.4 13.2Z" fill="#5aa0f0"/></svg>
<div class="t" style="left:1366.0px;top:844px;font-size:14px;line-height:14px;color:#222;letter-spacing:-0.167px;">Refresh</div>
<div style="position:absolute;left:0px;top:870px;width:1431px;height:30px;background:#fff;"></div>
<svg style="position:absolute;left:0px;top:890px" width="8" height="10" viewBox="0 0 8 10"><path d="M0.5 2 Q0.8 9 7 9.8" fill="none" stroke="#9a9a9a" stroke-width="1.4"/></svg>
<div class="t" style="left:3.5px;top:876px;font-size:14px;line-height:14px;color:#333;">D</div>
<div style="position:absolute;left:962px;top:879px;width:2px;height:2px;background:#bdb3a6;"></div>
<div style="position:absolute;left:1113px;top:879px;width:2px;height:2px;background:#bdb3a6;"></div>
<div style="position:absolute;left:962px;top:883px;width:2px;height:2px;background:#bdb3a6;"></div>
<div style="position:absolute;left:1113px;top:883px;width:2px;height:2px;background:#bdb3a6;"></div>
<div style="position:absolute;left:962px;top:887px;width:2px;height:2px;background:#bdb3a6;"></div>
<div style="position:absolute;left:1113px;top:887px;width:2px;height:2px;background:#bdb3a6;"></div>
<div style="position:absolute;left:962px;top:891px;width:2px;height:2px;background:#bdb3a6;"></div>
<div style="position:absolute;left:1113px;top:891px;width:2px;height:2px;background:#bdb3a6;"></div>
<div style="position:absolute;left:965px;top:870px;width:130px;height:30px;background:#e8e8e8;border-right:1px solid #cfcfcf;box-sizing:border-box;"></div>
<div style="position:absolute;left:965px;top:870px;width:95px;height:30px;background:#a5a5a5;"></div>
<div class="t" style="left:986.0px;top:878px;font-size:14px;line-height:14px;color:#333;letter-spacing:0.045px;">373M of 512M</div>
<div style="position:absolute;left:1065px;top:872px;width:1px;height:28px;background:#222;"></div>
<div style="position:absolute;left:1062px;top:871px;width:7px;height:1px;background:#222;"></div>
<svg style="position:absolute;left:1097px;top:877px" width="12" height="16" viewBox="0 0 12 16"><rect x="0" y="1.2" width="12" height="1.6" fill="#5d86c4"/><rect x="4" y="0" width="4" height="1.5" fill="#5d86c4"/><path d="M1 3.5 H11 L10 15.5 H2Z" fill="#b8d2f2" stroke="#5d86c4" stroke-width="1"/><path d="M4.3 5V14M6 5V14M7.7 5V14" stroke="#5d86c4" stroke-width="0.8"/></svg>
</body></html>
